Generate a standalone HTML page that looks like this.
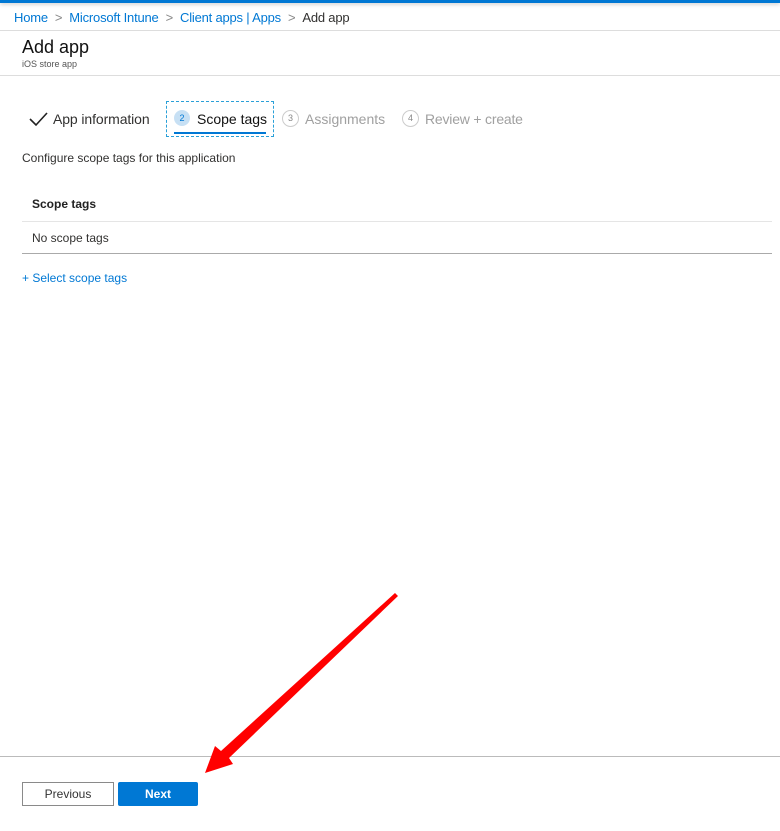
<!DOCTYPE html>
<html><head><meta charset="utf-8"><style>
body{margin:0;width:780px;height:831px;background:#fff;font-family:"Liberation Sans",sans-serif;position:relative;overflow:hidden;color:#323130}
.a{position:absolute;white-space:nowrap}
.blue{color:#0078d4}
</style></head><body>
<div class="a" style="left:0;top:0;width:780px;height:3px;background:#0078d4;box-shadow:0 1px 4px rgba(0,0,0,.25)"></div>
<div class="a" style="left:14px;top:10px;font-size:13px;line-height:16px;letter-spacing:-0.2px">
<span class="blue">Home</span><span style="color:#888;margin:0 7px">&gt;</span><span class="blue">Microsoft Intune</span><span style="color:#888;margin:0 7px">&gt;</span><span class="blue">Client apps | Apps</span><span style="color:#888;margin:0 7px">&gt;</span><span>Add app</span></div>
<div class="a" style="left:0;top:30px;width:780px;height:1px;background:#ddd"></div>
<div class="a" style="left:22px;top:37px;font-size:18px;color:#111">Add app</div>
<div class="a" style="left:22px;top:59px;font-size:9px;color:#555">iOS store app</div>
<div class="a" style="left:0;top:75px;width:780px;height:1px;background:#ddd"></div>
<svg class="a" style="left:29px;top:111px" width="20" height="16"><path d="M1 8 L7 14 L18 2" fill="none" stroke="#222" stroke-width="1.6"/></svg>
<div class="a" style="left:53px;top:111px;font-size:14px;letter-spacing:-0.1px">App information</div>
<div class="a" style="left:166px;top:101px;width:106px;height:34px;border:1px dashed #2aa0d8"></div>
<div class="a" style="left:174px;top:110px;width:16px;height:16px;border-radius:50%;background:#c7e0f4;color:#0078d4;font-size:9px;text-align:center;line-height:16px">2</div>
<div class="a" style="left:197px;top:111px;font-size:14px;color:#111">Scope tags</div>
<div class="a" style="left:174px;top:132px;width:92px;height:2px;background:#0078d4"></div>
<div class="a" style="left:282px;top:110px;width:15px;height:15px;border-radius:50%;border:1px solid #ccc;color:#888;font-size:9px;text-align:center;line-height:15px">3</div>
<div class="a" style="left:305px;top:111px;font-size:14px;color:#a0a0a0">Assignments</div>
<div class="a" style="left:402px;top:110px;width:15px;height:15px;border-radius:50%;border:1px solid #ccc;color:#888;font-size:9px;text-align:center;line-height:15px">4</div>
<div class="a" style="left:425px;top:111px;font-size:14px;color:#a0a0a0;letter-spacing:-0.2px">Review + create</div>
<div class="a" style="left:22px;top:151px;font-size:12px">Configure scope tags for this application</div>
<div class="a" style="left:32px;top:197px;font-size:12px;font-weight:bold;color:#222">Scope tags</div>
<div class="a" style="left:22px;top:221px;width:750px;height:1px;background:#e5e5e5"></div>
<div class="a" style="left:32px;top:231px;font-size:12px">No scope tags</div>
<div class="a" style="left:22px;top:253px;width:750px;height:1px;background:#aaa"></div>
<div class="a blue" style="left:22px;top:271px;font-size:12px">+ Select scope tags</div>
<div class="a" style="left:0;top:756px;width:780px;height:1px;background:#bbb"></div>
<div class="a" style="left:22px;top:782px;width:90px;height:22px;border:1px solid #8a8a8a;font-size:12px;text-align:center;line-height:22px;color:#333">Previous</div>
<div class="a" style="left:118px;top:782px;width:80px;height:24px;background:#0078d4;border-radius:2px;font-size:12px;font-weight:bold;text-align:center;line-height:24px;color:#fff">Next</div>
<svg class="a" style="left:0;top:0" width="780" height="831"><path d="M205 773 L215 746 L221 751 L395 593 L398 596 L229 758 L233 764 Z" fill="#f00"/></svg>
</body></html>
